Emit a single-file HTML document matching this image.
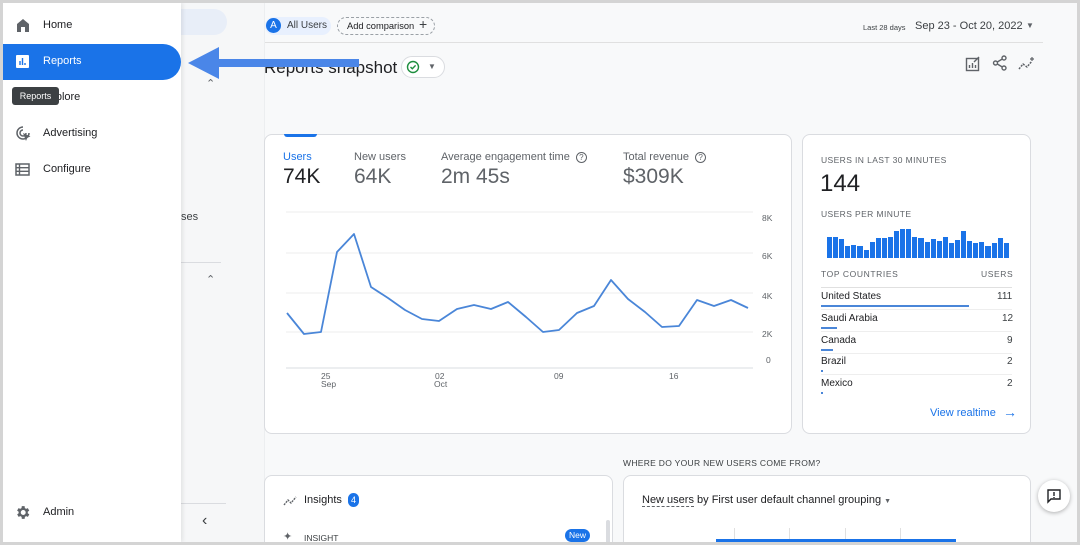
<!DOCTYPE html>
<html><head><meta charset="utf-8"><style>
*{box-sizing:border-box;margin:0;padding:0}
body{width:1080px;height:545px;overflow:hidden;font-family:"Liberation Sans",Arial,sans-serif;background:#d4d4d4;position:relative}
#frame{position:absolute;left:3px;top:3px;width:1074px;height:539px;background:#f8f9fa;overflow:hidden}
.abs{position:absolute}
.card{position:absolute;background:#fff;border:1px solid #dadce0;border-radius:8px}
.t{position:absolute;white-space:nowrap}
</style></head><body>
<div id="frame">
<div class="abs" style="left:178px;top:0;width:84px;height:539px;background:#f6f7f8;border-right:1px solid #eceef0"></div>
<div class="abs" style="left:178px;top:6px;width:46px;height:26px;background:#e8eef8;border-radius:0 13px 13px 0"></div>
<div class="t" style="left:178px;top:208px;font-size:11px;color:#3c4043">ses</div>
<div class="abs" style="left:178px;top:259px;width:40px;height:1px;background:#dadce0"></div>
<div class="t" style="left:203px;top:74px;font-size:11px;color:#5f6368">&#8963;</div>
<div class="t" style="left:203px;top:270px;font-size:11px;color:#5f6368">&#8963;</div>
<div class="abs" style="left:178px;top:500px;width:45px;height:1px;background:#dadce0"></div>
<div class="t" style="left:199px;top:509px;font-size:16px;color:#3c4043">&#8249;</div>

<div class="abs" style="left:262px;top:14px;width:66px;height:18px;background:#e8f0fe;border-radius:9px"></div>
<div class="abs" style="left:263px;top:15px;width:15px;height:15px;background:#1a73e8;border-radius:50%;color:#fff;font-size:10px;text-align:center;line-height:15px">A</div>
<div class="t" style="left:284px;top:17px;font-size:10px;color:#3c4043">All Users</div>
<div class="abs" style="left:334px;top:14px;width:98px;height:18px;border:1px dashed #9aa0a6;border-radius:9px"></div>
<div class="t" style="left:344px;top:18px;font-size:9.3px;color:#202124">Add comparison</div>
<div class="t" style="left:416px;top:13px;font-size:14px;color:#3c4043">+</div>
<div class="t" style="left:860px;top:20px;font-size:7.5px;color:#3c4043">Last 28 days</div>
<div class="t" style="left:912px;top:17px;font-size:11px;color:#3c4043">Sep 23 - Oct 20, 2022</div>
<div class="t" style="left:1023px;top:18px;font-size:8px;color:#5f6368">&#9660;</div>
<div class="abs" style="left:262px;top:39px;width:778px;height:1px;background:#e0e0e0"></div>
<div class="t" style="left:261px;top:55px;font-size:17px;color:#202124">Reports snapshot</div>
<div class="abs" style="left:398px;top:53px;width:44px;height:22px;border:1px solid #dadce0;border-radius:11px;background:#fff"></div>
<svg class="abs" style="left:403px;top:57px" width="14" height="14" viewBox="0 0 14 14"><circle cx="7" cy="7" r="5.5" fill="none" stroke="#1e8e3e" stroke-width="1.4"/><path d="M4.5 7l1.8 1.8L9.6 5.4" fill="none" stroke="#1e8e3e" stroke-width="1.4"/></svg>
<div class="t" style="left:425px;top:59px;font-size:8px;color:#5f6368">&#9660;</div>
<svg class="abs" style="left:962px;top:53px" width="16" height="16" viewBox="0 0 16 16"><rect x="1.5" y="2.5" width="12" height="12" fill="none" stroke="#5f6368" stroke-width="1.4"/><path d="M4.5 12V9M7.5 12V7M10.5 12V9" stroke="#5f6368" stroke-width="1.4"/><path d="M9 6l5-5" stroke="#5f6368" stroke-width="1.4"/></svg>
<svg class="abs" style="left:989px;top:52px" width="16" height="16" viewBox="0 0 16 16"><circle cx="12" cy="3" r="2" fill="none" stroke="#5f6368" stroke-width="1.4"/><circle cx="3.5" cy="8" r="2" fill="none" stroke="#5f6368" stroke-width="1.4"/><circle cx="12" cy="13" r="2" fill="none" stroke="#5f6368" stroke-width="1.4"/><path d="M5.3 7l5-3M5.3 9l5 3" stroke="#5f6368" stroke-width="1.4"/></svg>
<svg class="abs" style="left:1015px;top:53px" width="18" height="16" viewBox="0 0 18 16"><path d="M1 13l4-5 4 3 5-6" fill="none" stroke="#5f6368" stroke-width="1.5" stroke-dasharray="2 1.2"/><path d="M14 1v4M12 3h4" stroke="#5f6368" stroke-width="1.2"/></svg>

<div class="card" style="left:261px;top:131px;width:528px;height:300px"></div>
<div class="abs" style="left:281px;top:131px;width:33px;height:3px;background:#1a73e8;border-radius:0 0 3px 3px"></div>
<div class="t" style="left:280px;top:148px;font-size:11px;color:#1a73e8">Users</div>
<div class="t" style="left:280px;top:162px;font-size:21px;color:#202124">74K</div>
<div class="t" style="left:351px;top:148px;font-size:11px;color:#5f6368">New users</div>
<div class="t" style="left:351px;top:162px;font-size:21px;color:#5f6368">64K</div>
<div class="t" style="left:438px;top:148px;font-size:11px;color:#5f6368">Average engagement time <span style="display:inline-block;width:11px;height:11px;border:1px solid #5f6368;border-radius:50%;font-size:8px;text-align:center;line-height:9px;margin-left:3px">?</span></div>
<div class="t" style="left:438px;top:162px;font-size:21px;color:#5f6368">2m 45s</div>
<div class="t" style="left:620px;top:148px;font-size:11px;color:#5f6368">Total revenue <span style="display:inline-block;width:11px;height:11px;border:1px solid #5f6368;border-radius:50%;font-size:8px;text-align:center;line-height:9px;margin-left:3px">?</span></div>
<div class="t" style="left:620px;top:162px;font-size:21px;color:#5f6368">$309K</div>
<svg class="abs" style="left:0;top:0" width="1074" height="539">
<g stroke="#eeeeee" stroke-width="1"><line x1="283" y1="209" x2="750" y2="209"/><line x1="283" y1="250" x2="750" y2="250"/><line x1="283" y1="290" x2="750" y2="290"/><line x1="283" y1="329" x2="750" y2="329"/><line x1="283" y1="365" x2="750" y2="365" stroke="#dadce0"/></g>
<polyline fill="none" stroke="#4a86d8" stroke-width="1.8" stroke-linejoin="round" points="284,310 301,331 318,329 334,249 351,231 368,284 385,295 402,307 419,316 436,318 454,306 471,302 488,306 505,299 523,314 540,329 556,327 574,310 591,303 608,277 625,296 642,309 659,324 676,323 694,297 711,303 728,297 745,305"/>
<g font-family="Liberation Sans,Arial,sans-serif" font-size="8.5" fill="#5f6368">
<text x="759" y="218">8K</text><text x="759" y="256">6K</text><text x="759" y="296">4K</text><text x="759" y="334">2K</text><text x="763" y="360">0</text>
<text x="318" y="376">25</text><text x="318" y="384">Sep</text><text x="432" y="376">02</text><text x="431" y="384">Oct</text><text x="551" y="376">09</text><text x="666" y="376">16</text>
</g>
</svg>

<div class="card" style="left:799px;top:131px;width:229px;height:300px"></div>
<div class="t" style="left:818px;top:152px;font-size:8.5px;color:#5f6368;letter-spacing:.4px">USERS IN LAST 30 MINUTES</div>
<div class="t" style="left:817px;top:167px;font-size:24px;color:#202124">144</div>
<div class="t" style="left:818px;top:206px;font-size:8.5px;color:#5f6368;letter-spacing:.4px">USERS PER MINUTE</div>
<div id="bars" class="abs" style="left:824px;top:226px;width:182px;height:29px;display:flex;align-items:flex-end;gap:1px"></div>
<div class="t" style="left:818px;top:266px;font-size:8.5px;color:#5f6368;letter-spacing:.6px">TOP COUNTRIES</div>
<div class="t" style="left:978px;top:266px;font-size:8.5px;color:#5f6368;letter-spacing:.6px">USERS</div>
<div class="abs" style="left:818px;top:284px;width:191px;height:1px;background:#e0e0e0"></div>
<div class="t" style="left:818px;top:288px;font-size:10px;color:#202124">United States</div><div class="t" style="left:994px;top:288px;font-size:10px;color:#3c4043">111</div>
<div class="abs" style="left:818px;top:302px;width:148px;height:2px;background:#4a86d8"></div>
<div class="abs" style="left:818px;top:306px;width:191px;height:1px;background:#eeeeee"></div>
<div class="t" style="left:818px;top:310px;font-size:10px;color:#202124">Saudi Arabia</div><div class="t" style="left:999px;top:310px;font-size:10px;color:#3c4043">12</div>
<div class="abs" style="left:818px;top:324px;width:16px;height:2px;background:#4a86d8"></div>
<div class="abs" style="left:818px;top:328px;width:191px;height:1px;background:#eeeeee"></div>
<div class="t" style="left:818px;top:332px;font-size:10px;color:#202124">Canada</div><div class="t" style="left:1004px;top:332px;font-size:10px;color:#3c4043">9</div>
<div class="abs" style="left:818px;top:346px;width:12px;height:2px;background:#4a86d8"></div>
<div class="abs" style="left:818px;top:350px;width:191px;height:1px;background:#eeeeee"></div>
<div class="t" style="left:818px;top:353px;font-size:10px;color:#202124">Brazil</div><div class="t" style="left:1004px;top:353px;font-size:10px;color:#3c4043">2</div>
<div class="abs" style="left:818px;top:367px;width:2px;height:2px;background:#4a86d8"></div>
<div class="abs" style="left:818px;top:371px;width:191px;height:1px;background:#eeeeee"></div>
<div class="t" style="left:818px;top:375px;font-size:10px;color:#202124">Mexico</div><div class="t" style="left:1004px;top:375px;font-size:10px;color:#3c4043">2</div>
<div class="abs" style="left:818px;top:389px;width:2px;height:2px;background:#4a86d8"></div>
<div class="t" style="left:927px;top:404px;font-size:11px;color:#1a73e8">View realtime</div>
<div class="t" style="left:1000px;top:401px;font-size:14px;color:#1a73e8">&#8594;</div>

<div class="t" style="left:620px;top:455px;font-size:8.5px;color:#3c4043;letter-spacing:.3px">WHERE DO YOUR NEW USERS COME FROM?</div>
<div class="card" style="left:261px;top:472px;width:349px;height:80px"></div>
<svg class="abs" style="left:280px;top:492px" width="16" height="12" viewBox="0 0 16 12"><path d="M1 10l4-5 3 3 5-6" fill="none" stroke="#5f6368" stroke-width="1.4" stroke-dasharray="2 1"/></svg>
<div class="t" style="left:301px;top:491px;font-size:11px;color:#202124">Insights</div>
<div class="abs" style="left:345px;top:490px;width:11px;height:14px;background:#1a73e8;border-radius:6px;color:#fff;font-size:9px;text-align:center;line-height:14px">4</div>
<div class="t" style="left:280px;top:527px;font-size:11px;color:#5f6368">&#10022;</div>
<div class="t" style="left:301px;top:530px;font-size:8.5px;color:#3c4043">INSIGHT</div>
<div class="abs" style="left:562px;top:526px;width:25px;height:13px;background:#1a73e8;border-radius:7px;color:#fff;font-size:8.5px;text-align:center;line-height:13px">New</div>
<div class="abs" style="left:603px;top:517px;width:4px;height:25px;background:#dadce0;border-radius:2px"></div>
<div class="card" style="left:620px;top:472px;width:408px;height:80px"></div>
<div class="t" style="left:639px;top:491px;font-size:11px;color:#202124"><span style="border-bottom:1px dashed #5f6368">New users</span> by First user default channel grouping <span style="font-size:7px;color:#5f6368">&#9660;</span></div>
<div class="abs" style="left:731px;top:525px;width:1px;height:20px;background:#e0e0e0"></div>
<div class="abs" style="left:786px;top:525px;width:1px;height:20px;background:#e0e0e0"></div>
<div class="abs" style="left:842px;top:525px;width:1px;height:20px;background:#e0e0e0"></div>
<div class="abs" style="left:897px;top:525px;width:1px;height:20px;background:#e0e0e0"></div>
<div class="abs" style="left:713px;top:536px;width:240px;height:6px;background:#1a73e8"></div>
<div class="abs" style="left:1035px;top:477px;width:32px;height:32px;border-radius:50%;background:#fff;box-shadow:0 1px 4px rgba(0,0,0,.3)"></div>
<svg class="abs" style="left:1043px;top:485px" width="16" height="16" viewBox="0 0 16 16"><path d="M2 2h12v9H5l-3 3z" fill="none" stroke="#202124" stroke-width="1.4"/><path d="M8 4v4M8 9v1" stroke="#202124" stroke-width="1.4"/></svg>

<div class="abs" style="left:0;top:0;width:178px;height:539px;background:#fff;box-shadow:2px 0 4px rgba(0,0,0,.08)"></div>
<svg class="abs" style="left:12px;top:14px" width="16" height="16" viewBox="0 0 16 16"><path d="M2 7l6-5 6 5v8h-4v-5H6v5H2z" fill="#5f6368"/></svg>
<div class="t" style="left:40px;top:16px;font-size:11px;color:#202124">Home</div>
<div class="abs" style="left:0;top:41px;width:178px;height:36px;background:#1a73e8;border-radius:0 18px 18px 0"></div>
<svg class="abs" style="left:12px;top:51px" width="15" height="15" viewBox="0 0 15 15"><rect x="1" y="1" width="13" height="13" rx="1" fill="#fff"/><path d="M5 11V7M7.5 11V4M10 11V9" stroke="#1a73e8" stroke-width="1.4"/></svg>
<div class="t" style="left:40px;top:52px;font-size:11px;color:#fff">Reports</div>
<svg class="abs" style="left:12px;top:122px" width="17" height="17" viewBox="0 0 17 17"><path d="M8 2a6 6 0 1 0 6 6" fill="none" stroke="#5f6368" stroke-width="1.5"/><path d="M8 5a3 3 0 1 0 3 3" fill="none" stroke="#5f6368" stroke-width="1.5"/><path d="M8 8l3 8 1.3-3.2L15.5 11.5z" fill="#5f6368"/></svg>
<div class="t" style="left:40px;top:124px;font-size:11px;color:#202124">Advertising</div>
<svg class="abs" style="left:12px;top:160px" width="15" height="13" viewBox="0 0 15 13"><rect x="1" y="1" width="13" height="11" fill="none" stroke="#5f6368" stroke-width="1.5"/><path d="M1 4.7h13M1 8.3h13M4.5 1v11" stroke="#5f6368" stroke-width="1.4"/></svg>
<div class="t" style="left:40px;top:160px;font-size:11px;color:#202124">Configure</div>
<div class="t" style="left:40px;top:88px;font-size:11px;color:#202124">Explore</div>
<div class="abs" style="left:9px;top:84px;width:47px;height:18px;background:#3c4043;border-radius:3px;color:#fff;font-size:9px;line-height:18px;text-align:center">Reports</div>
<svg class="abs" style="left:11px;top:501px" width="17" height="17" viewBox="0 0 24 24"><path fill="#5f6368" d="M19.4 13a7.5 7.5 0 0 0 0-2l2.1-1.6-2-3.5-2.5 1a7 7 0 0 0-1.7-1L15 3h-4l-.4 2.9a7 7 0 0 0-1.7 1l-2.5-1-2 3.5L6.6 11a7.5 7.5 0 0 0 0 2l-2.1 1.6 2 3.5 2.5-1a7 7 0 0 0 1.7 1L11 21h4l.4-2.9a7 7 0 0 0 1.7-1l2.5 1 2-3.5zM13 15.5a3.5 3.5 0 1 1 0-7 3.5 3.5 0 0 1 0 7z"/></svg>
<div class="t" style="left:40px;top:503px;font-size:11px;color:#202124">Admin</div>

<svg class="abs" style="left:180px;top:43px" width="180" height="34" viewBox="0 0 180 34"><path d="M5 17L36 1v12h140v8H36v12z" fill="#4a86e8"/></svg>
</div>
<script>
var h=[21,21,19,12,13,12,8,16,20,20,21,27,29,29,21,20,16,19,17,21,15,18,27,17,15,16,12,15,20,15];
var b=document.getElementById('bars');h.forEach(function(v){var d=document.createElement('div');d.style.cssText='flex:1;background:#1a73e8;height:'+v+'px';b.appendChild(d);});
</script>
</body></html>
